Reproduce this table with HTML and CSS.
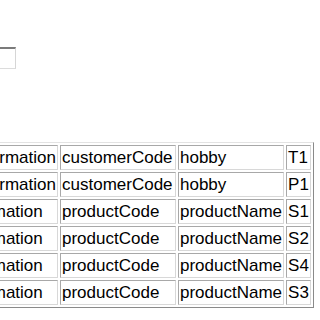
FILE: index.html
```html
<!DOCTYPE html>
<html>
<head>
<meta charset="utf-8">
<link rel="stylesheet" href="styles.css">
</head>
<body>
<div class="page">
  <div class="search"><input class="search-input" type="text"></div>
  <table class="grid">
    <tr><td class="c1">customerInformation</td><td class="c2">customerCode</td><td class="c3">hobby</td><td class="c4">T1</td></tr>
    <tr><td class="c1">customerInformation</td><td class="c2">customerCode</td><td class="c3">hobby</td><td class="c4">P1</td></tr>
    <tr><td class="c1">productInformation</td><td class="c2">productCode</td><td class="c3">productName</td><td class="c4">S1</td></tr>
    <tr><td class="c1">productInformation</td><td class="c2">productCode</td><td class="c3">productName</td><td class="c4">S2</td></tr>
    <tr><td class="c1">productInformation</td><td class="c2">productCode</td><td class="c3">productName</td><td class="c4">S4</td></tr>
    <tr><td class="c1">productInformation</td><td class="c2">productCode</td><td class="c3">productName</td><td class="c4">S3</td></tr>
  </table>
</div>
</body>
</html>
```
FILE: styles.css
```css
html, body {
  margin: 0;
  padding: 0;
  background: #fff;
}
body {
  width: 320px;
  height: 320px;
  overflow: hidden;
  font-family: "Liberation Sans", Arial, sans-serif;
  font-size: 17px;
  color: #000;
}
.page {
  margin-left: -104px;
  padding-top: 47px;
}
.search {
  display: flex;
}
.search-input {
  box-sizing: border-box;
  width: 120px;
  height: 22px;
  margin: 0;
  border-width: 2px 1px 1px 1px;
  border-style: solid;
  border-color: #7b7b7b #d6d6d6 #dcdcdc #9a9a9a;
  background: #fff;
}
.grid {
  margin-top: 73px;
  border-collapse: separate;
  border-spacing: 2px;
  border: 1px solid;
  border-color: #e3e3e3 #8a8a8a #8a8a8a #e3e3e3;
}
.grid td {
  padding: 1px;
  line-height: 21px;
  white-space: nowrap;
  border: 1px solid;
  border-color: #a8a8a8 #d8d8d8 #d8d8d8 #a8a8a8;
  text-align: left;
}
.c1 { width: 155px; }
.c2 { width: 112px; }
.c3 { width: 102px; }
.c4 { width: 19px; }
```
